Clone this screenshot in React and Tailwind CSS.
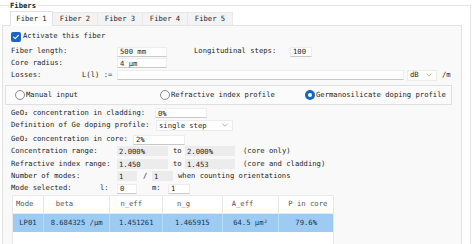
const mono = "font-['DejaVu_Sans_Mono','Liberation_Mono',monospace]"

function Input({ w, value, readOnly }) {
  return (
    <div
      className={`h-[10px] ${w} flex items-center pl-[2px] leading-none ${
        readOnly
          ? 'bg-[#ececec]'
          : 'bg-white border border-[#ededed] border-b-[#c9c9c9]'
      }`}
    >
      {value}
    </div>
  )
}

function Select({ w, value }) {
  return (
    <div className={`h-[11px] ${w} flex items-center justify-between pl-[2px] pr-[4px] bg-white border border-[#ececec] leading-none`}>
      <span>{value}</span>
      <Chevron />
    </div>
  )
}

function Chevron() {
  return (
    <svg width="6" height="4" viewBox="0 0 6 4" fill="none" stroke="#9a9a9a" strokeWidth="0.8" aria-hidden="true">
      <path d="M0.5 0.8L3 3.2L5.5 0.8" />
    </svg>
  )
}

function Radio({ checked, label }) {
  return (
    <div className="flex items-center gap-[1px]">
      {checked ? (
        <span className="w-[10px] h-[10px] rounded-full bg-[#0f67c8] flex items-center justify-center">
          <span className="w-[4px] h-[4px] rounded-full bg-white" />
        </span>
      ) : (
        <span className="w-[10px] h-[10px] rounded-full border border-[#8c8c8c] bg-[#fbfbfb]" />
      )}
      <span>{label}</span>
    </div>
  )
}

function Row({ className = '', children }) {
  return <div className={`flex items-center pl-[8px] ${className}`}>{children}</div>
}

const tabs = ['Fiber 1', 'Fiber 2', 'Fiber 3', 'Fiber 4', 'Fiber 5']

const cols = [
  { name: 'Mode', w: 'w-[31px]', val: 'LP01', pl: 'pl-[3px]' },
  { name: 'beta', w: 'w-[67px]', val: '8.684325 /µm', pl: 'pl-[12px]' },
  { name: 'n_eff', w: 'w-[53px]', val: '1.451261', pl: 'pl-[10px]' },
  { name: 'n_g', w: 'w-[60px]', val: '1.465915', pl: 'pl-[14px]' },
  { name: 'A_eff', w: 'w-[57px]', val: '64.5 µm²', pl: 'pl-[9px]' },
  { name: 'P in core', w: 'w-[54px]', val: '79.6%', pl: 'pl-[9px]' },
]

export default function App() {
  return (
    <div className={`w-[474px] h-[244px] overflow-hidden bg-white text-[7.2px] text-[#262626] ${mono}`}>
      <div className="relative mt-[5px] w-[471px] h-[260px] border-t border-r border-[#e6e6e6] pl-[2px] pt-[5px]">
        <div className="absolute left-[10px] top-[-4px] bg-white pr-[2px] font-bold leading-[8px] text-[#222]">Fibers</div>

        {/* tab bar */}
        <div className="flex items-end ml-[8px] h-[15px] -mb-px relative z-10">
          {tabs.map((t, i) =>
            i === 0 ? (
              <div key={t} className="h-[15px] w-[43px] bg-white border border-b-0 border-[#e3e3e3] flex items-center justify-center">
                {t}
              </div>
            ) : (
              <div key={t} className="h-[13px] w-[45px] bg-[#f3f3f3] border border-l-0 border-b-0 border-[#e8e8e8] flex items-center justify-center mb-px">
                {t}
              </div>
            )
          )}
        </div>

        {/* tab pane */}
        <div className="w-[460px] h-[230px] border border-[#e3e3e3] bg-[#f9f9f9] flex flex-col">
          <Row className="mt-[5px] h-[12px] gap-[2px]">
            <span className="w-[10px] h-[10px] rounded-[2px] bg-[#1b65c6] flex items-center justify-center">
              <svg width="8" height="8" viewBox="0 0 8 8" fill="none" stroke="white" strokeWidth="1.1" strokeLinecap="round" strokeLinejoin="round" aria-hidden="true">
                <path d="M1.6 4.2L3.2 5.7L6.4 2.3" />
              </svg>
            </span>
            <span>Activate this fiber</span>
          </Row>

          <Row className="mt-[3px] h-[12px]">
            <span className="w-[106px]">Fiber length:</span>
            <Input w="w-[50px]" value="500 mm" />
            <span className="ml-[27px] w-[96px]">Longitudinal steps:</span>
            <Input w="w-[22px]" value="100" />
          </Row>

          <Row className="h-[12px]">
            <span className="w-[106px]">Core radius:</span>
            <Input w="w-[50px]" value="4 µm" />
          </Row>

          <Row className="h-[12px]">
            <span className="w-[71px]">Losses:</span>
            <span className="w-[35px]">L(l) :=</span>
            <Input w="w-[287px]" value="" />
            <div className="ml-[3px]">
              <Select w="w-[30px]" value="dB" />
            </div>
            <span className="ml-[5px]">/m</span>
          </Row>

          <div className="mt-[4px] ml-[2px] w-[447px] h-[21px] border border-[#e0e0e0] bg-[#fbfbfb] grid grid-cols-[145px_145px_145px] items-center pl-[9px]">
            <Radio label="Manual input" />
            <Radio label="Refractive index profile" />
            <Radio checked label="Germanosilicate doping profile" />
          </div>

          <Row className="mt-[2px] h-[12px]">
            <span className="w-[144px]">GeO₂ concentration in cladding:</span>
            <Input w="w-[52px]" value="0%" />
          </Row>

          <Row className="h-[13px]">
            <span className="w-[145px]">Definition of Ge doping profile:</span>
            <Select w="w-[77px]" value="single step" />
          </Row>

          <Row className="mt-[2px] h-[12px]">
            <span className="w-[122px]">GeO₂ concentration in core:</span>
            <Input w="w-[52px]" value="2%" />
          </Row>

          <Row className="h-[12px]">
            <span className="w-[106px]">Concentration range:</span>
            <Input readOnly w="w-[51px]" value="2.000%" />
            <span className="ml-[5px] w-[12px]">to</span>
            <Input readOnly w="w-[50px]" value="2.000%" />
            <span className="ml-[8px]">(core only)</span>
          </Row>

          <Row className="mt-[1px] h-[12px]">
            <span className="w-[106px]">Refractive index range:</span>
            <Input readOnly w="w-[51px]" value="1.450" />
            <span className="ml-[5px] w-[12px]">to</span>
            <Input readOnly w="w-[50px]" value="1.453" />
            <span className="ml-[8px]">(core and cladding)</span>
          </Row>

          <Row className="h-[13px]">
            <span className="w-[106px]">Number of modes:</span>
            <Input readOnly w="w-[20px]" value="1" />
            <span className="ml-[6px] w-[9px]">/</span>
            <Input readOnly w="w-[21px]" value="1" />
            <span className="ml-[5px]">when counting orientations</span>
          </Row>

          <Row className="h-[12px]">
            <span className="w-[89px]">Mode selected:</span>
            <span className="w-[17px]">l:</span>
            <Input w="w-[20px]" value="0" />
            <span className="ml-[15px] w-[16px]">m:</span>
            <Input w="w-[22px]" value="1" />
          </Row>

          {/* modes table */}
          <div className="mt-[1px] ml-[9px] w-[322px] h-[60px] bg-white border border-[#e8e8e8]">
            <div className="flex h-[18px] border-b border-[#e8e8e8] text-[#555]">
              {cols.map((c, i) => (
                <div key={c.name} className={`${c.w} ${c.pl} flex items-center ${i < cols.length - 1 ? 'border-r border-[#e8e8e8]' : ''}`}>
                  {c.name}
                </div>
              ))}
            </div>
            <div className="flex h-[18px] bg-[#9dcbf1] text-[#14365a]">
              {cols.map((c, i) => (
                <div key={c.name} className={`${c.w} flex items-center justify-center ${i < cols.length - 1 ? 'border-r border-[#b9daf5]' : ''}`}>
                  {c.val}
                </div>
              ))}
            </div>
          </div>
        </div>
      </div>
    </div>
  )
}
